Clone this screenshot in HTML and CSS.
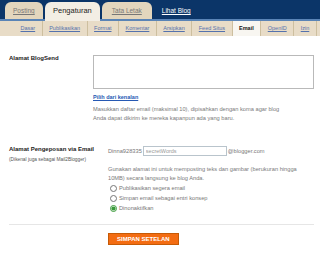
FILE: index.html
```html
<!DOCTYPE html>
<html lang="id">
<head>
    <meta charset="UTF-8">
    <title>Blogger: Pengaturan - Email</title>
    <link rel="stylesheet" href="styles.css">
</head>
<body>
    <!-- Main tabs -->
    <div class="header">
        <a class="tab" href="#">Posting</a>
        <span class="tab tab-active">Pengaturan</span>
        <a class="tab" href="#">Tata Letak</a>
        <a class="view-blog" href="#">Lihat Blog</a>
    </div>

    <!-- Settings sub tabs -->
    <div class="subnav">
        <a href="#">Dasar</a>
        <a href="#">Publikasikan</a>
        <a href="#">Format</a>
        <a href="#">Komentar</a>
        <a href="#">Arsipkan</a>
        <a href="#">Feed Situs</a>
        <span class="current">Email</span>
        <a href="#">OpenID</a>
        <a href="#">Izin</a>
    </div>

    <div class="content">
        <div class="row">
            <div class="label">Alamat BlogSend</div>
            <div class="field">
                <textarea class="blogsend"></textarea>
                <a class="contacts" href="#">Pilih dari kenalan</a>
                <p class="help help-narrow">Masukkan daftar email (maksimal 10), dipisahkan dengan koma agar blog Anda dapat dikirim ke mereka kapanpun ada yang baru.</p>
            </div>
        </div>

        <div class="row row-mail">
            <div class="label label-wide">
                Alamat Pengeposan via Email
                <small>(Dikenal juga sebagai Mail2Blogger)</small>
            </div>
            <div class="field">
                <div class="address">
                    <span>Dinna928335</span>
                    <input class="secret" type="text" value="secretWords">
                    <span>@blogger.com</span>
                </div>
                <p class="help">Gunakan alamat ini untuk memposting teks dan gambar (berukuran hingga 10MB) secara langsung ke blog Anda.</p>
                <label class="option"><input type="radio" name="mode"> Publikasikan segera email</label>
                <label class="option"><input type="radio" name="mode"> Simpan email sebagai entri konsep</label>
                <label class="option"><input type="radio" name="mode" checked> Dinonaktifkan</label>
            </div>
        </div>

        <div class="actions">
            <button class="save-button">SIMPAN SETELAN</button>
        </div>
    </div>
</body>
</html>
```

FILE: styles.css
```css
/* Global */
body {
    margin: 0;
    font-family: "Liberation Sans", Arial, sans-serif;
    font-size: 5.7px;
    color: #333;
    background: #fff;
}

/* Top tabs on the navy bar */
.header {
    display: flex;
    align-items: flex-end;
    gap: 2px;
    height: 19px;
    padding-left: 5px;
    background-color: #0b3568;
    border-bottom: 2px solid #5a84b6;
}

.tab {
    display: block;
    height: 17px;
    line-height: 18px;
    padding: 0 10px;
    font-size: 6.5px;
    color: #777;
    background-color: #e3d6bd;
    border-radius: 6px 6px 0 0;
}

.tab:first-child {
    width: 22px;
    padding: 0 8px;
}

.tab-active {
    height: 19px;
    margin-bottom: -2px;
    padding: 0 8px;
    font-size: 7.5px;
    color: #222;
    background-color: #f3eee4;
}

.view-blog {
    margin-left: 8px;
    line-height: 16px;
    font-size: 6.5px;
    color: #fff;
}

/* Sub tabs */
.subnav {
    display: flex;
    height: 15px;
    padding-left: 14px;
    font-size: 5.5px;
    background-color: #e8dcc7;
}

.subnav a,
.subnav .current {
    line-height: 15px;
    padding: 0 6.5px;
    color: #5572ad;
    border-right: 1px solid #cdbf9f;
}

.subnav .current {
    color: #111;
    font-weight: bold;
    background-color: #f8f6f1;
}

/* Form */
.content {
    padding: 19px 6px 0 9px;
}

.row {
    display: flex;
}

.label {
    width: 84px;
    flex-shrink: 0;
    font-size: 6px;
    font-weight: bold;
    color: #222;
}

.label small {
    display: block;
    margin-top: 5px;
    font-size: 4.8px;
    font-weight: normal;
    color: #555;
}

.label-wide {
    width: 99px;
}

.field {
    flex: 1;
}

.blogsend {
    display: block;
    box-sizing: border-box;
    width: 221px;
    height: 34px;
    margin: 0;
    border: 1px solid #b9b9b9;
    resize: none;
}

.contacts {
    display: inline-block;
    margin-top: 5px;
    font-size: 5.5px;
    font-weight: bold;
    color: #2659b3;
}

.help {
    margin: 5px 0 0;
    line-height: 9px;
    color: #7a7a7a;
}

.help-narrow {
    max-width: 192px;
}

.row-mail {
    margin-top: 23px;
}

.address {
    display: flex;
    align-items: center;
    gap: 1px;
    color: #777;
}

.secret {
    box-sizing: border-box;
    width: 84px;
    height: 10px;
    margin: 0;
    padding: 0 2px;
    font-family: inherit;
    font-size: 5.5px;
    color: #999;
    border: 1px solid #b9c4cc;
}

.row-mail .help {
    margin-top: 9px;
}

.option {
    display: flex;
    align-items: center;
    gap: 2px;
    height: 10px;
    color: #777;
}

.option input {
    width: 7px;
    height: 7px;
    margin: 0 0 0 2px;
    accent-color: #3a9a3a;
}

/* Save button */
.actions {
    margin-top: 11px;
    padding: 8px 0 15px 99px;
    border-top: 1px solid #e6e6e6;
}

.save-button {
    padding: 2px 8px;
    font-family: inherit;
    font-size: 6px;
    font-weight: bold;
    color: #fff;
    background-color: #f36c12;
    border: 1px solid #c65a06;
    cursor: pointer;
}
```
